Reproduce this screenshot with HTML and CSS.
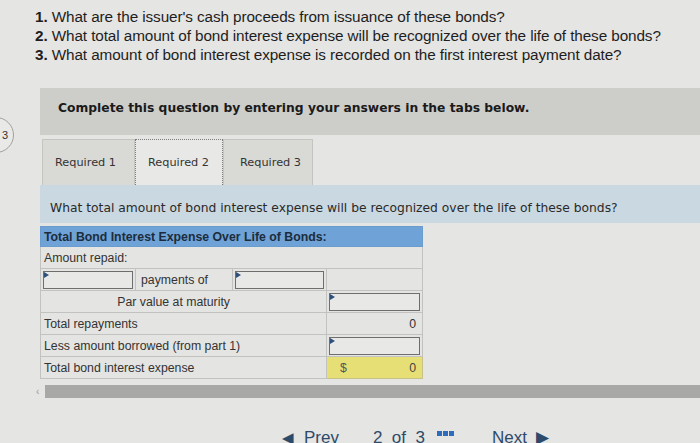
FILE: index.html
```html
<!DOCTYPE html>
<html>
<head>
<meta charset="utf-8">
<link rel="stylesheet" href="styles.css">
</head>
<body>
<div class="page">
  <div class="side-badge"><span>3</span></div>
  <div class="questions">
    <div class="q"><b>1.</b> What are the issuer's cash proceeds from issuance of these bonds?</div>
    <div class="q"><b>2.</b> What total amount of bond interest expense will be recognized over the life of these bonds?</div>
    <div class="q"><b>3.</b> What amount of bond interest expense is recorded on the first interest payment date?</div>
  </div>
  <div class="panel">
    <div class="instr">Complete this question by entering your answers in the tabs below.</div>
    <div class="tabs">
      <div class="tab">Required 1</div>
      <div class="tab active">Required 2</div>
      <div class="tab">Required 3</div>
    </div>
    <div class="prompt">What total amount of bond interest expense will be recognized over the life of these bonds?</div>
    <table class="grid">
      <colgroup><col class="c1"><col class="c2"><col class="c3"><col class="c4"></colgroup>
      <tr class="head"><td colspan="4">Total Bond Interest Expense Over Life of Bonds:</td></tr>
      <tr><td colspan="4">Amount repaid:</td></tr>
      <tr>
        <td class="inp"><div class="box"></div></td>
        <td class="txt">payments of</td>
        <td class="inp"><div class="box"></div></td>
        <td></td>
      </tr>
      <tr><td colspan="3" class="par">Par value at maturity</td><td class="inp"><div class="box"></div></td></tr>
      <tr><td colspan="3">Total repayments</td><td class="num">0</td></tr>
      <tr><td colspan="3">Less amount borrowed (from part 1)</td><td class="inp"><div class="box"></div></td></tr>
      <tr><td colspan="3">Total bond interest expense</td><td class="total"><span>$</span><span>0</span></td></tr>
    </table>
    <div class="scroll"><span class="arrow">‹</span><div class="bar"></div></div>
    <div class="pager">
      <span class="pv">&#9664;</span>
      <span class="pl">Prev</span>
      <span class="count">2&nbsp;&nbsp;of&nbsp;&nbsp;3</span>
      <span class="gridicon"><i></i><i></i><i></i></span>
      <span class="nx">Next&nbsp;&nbsp;&#9654;</span>
    </div>
  </div>
</div>
</body>
</html>
```
FILE: styles.css
```css
html, body {
  margin: 0;
  padding: 0;
  background: #e5e5e3;
  overflow: hidden;
}
.page {
  position: relative;
  width: 700px;
  height: 443px;
  overflow: hidden;
  font-family: "Liberation Sans", Arial, sans-serif;
  color: #222;
}
.side-badge {
  position: absolute;
  left: -22px;
  top: 117px;
  width: 36px;
  height: 36px;
  border: 1px solid #a0a0a0;
  border-radius: 50%;
  background: #e9e9e7;
  box-sizing: border-box;
  color: #333;
}
.side-badge span {
  position: absolute;
  left: 23px;
  top: 10px;
  font-size: 11px;
  line-height: 14px;
}
.questions {
  padding: 7px 0 0 35px;
  font-size: 15.3px;
  line-height: 19px;
  color: #1e1e1e;
  height: 88px;
  box-sizing: border-box;
  letter-spacing: -0.1px;
}
.q b { font-weight: bold; }
.panel {
  margin-left: 40px;
}
.instr {
  background: #cdcdca;
  height: 47px;
  padding-left: 18px;
  font-family: "DejaVu Sans", Verdana, sans-serif;
  font-weight: bold;
  font-size: 12.3px;
  line-height: 40px;
  color: #1a1a1a;
}
.tabs {
  display: flex;
  padding: 4px 0 0 2px;
  height: 50px;
  box-sizing: border-box;
}
.tab {
  width: 93px;
  height: 46px;
  box-sizing: border-box;
  background: #d9d9d6;
  border: 1px solid #c4c4c1;
  border-bottom: none;
  font-family: "DejaVu Sans", Verdana, sans-serif;
  font-size: 11.3px;
  color: #333;
  padding: 16px 0 0 12px;
}
.tab.active {
  width: 88px;
  background: #e8e8e6;
  border: 1px dotted #7c7c7c;
  border-bottom: none;
}
.tab:last-child { width: 90px; padding-left: 16px; }
.prompt {
  background: #c9d8e1;
  height: 38px;
  padding-left: 10px;
  font-family: "DejaVu Sans", Verdana, sans-serif;
  font-size: 12.3px;
  line-height: 46px;
  color: #2a2a2a;
}
.grid {
  margin-top: 3px;
  border-collapse: collapse;
  width: 382px;
  table-layout: fixed;
  font-size: 12.3px;
  color: #333;
  border: 1px solid #a7a7a5;
}
.c1 { width: 95px; }
.c2 { width: 97px; }
.c3 { width: 94px; }
.c4 { width: 96px; }
.grid td {
  height: 22px;
  padding: 0 3px;
  border: 1px solid #c2c2c0;
  background: #e4e4e2;
  white-space: nowrap;
  box-sizing: border-box;
}
.grid tr.head td {
  background: #6fa3d7;
  color: #1c2c3c;
  font-weight: bold;
  height: 20px;
  border-color: #6a9ccd;
}
.grid td.txt { padding-left: 5px; }
.grid td.par { text-align: right; padding-right: 96px; }
.grid td.num { text-align: right; padding-right: 6px; }
.grid td.inp {
  padding: 1px 2px;
  position: relative;
}
.box {
  height: 18px;
  box-sizing: border-box;
  border: 1px solid #6e6e6e;
  background: #e8e8e7;
  position: relative;
}
.box::before {
  content: "";
  position: absolute;
  left: 0;
  top: 0;
  border-top: 3px solid transparent;
  border-bottom: 3px solid transparent;
  border-left: 5px solid #2e4f7a;
}
.grid td.total {
  background: #e6df76;
  border-color: #c8c289;
}
.grid td.total span:first-child { padding-left: 10px; color: #555; }
.grid td.total span:last-child { float: right; padding-right: 3px; color: #444; }
.scroll {
  display: flex;
  align-items: center;
  margin-top: 6px;
  margin-left: -4px;
  height: 13px;
}
.scroll .arrow {
  width: 9px;
  font-size: 10px;
  color: #999;
  line-height: 13px;
}
.bar {
  flex: 1;
  height: 13px;
  background: #a8a8a6;
}
.pager {
  display: flex;
  align-items: flex-start;
  margin-top: 30px;
  padding-left: 242px;
  font-size: 17px;
  color: #2d4a6a;
  line-height: 20px;
}
.pv { margin-right: 10px; font-size: 15px; }
.pl { margin-right: 34px; }
.count { margin-right: 12px; }
.gridicon {
  display: flex;
  gap: 1px;
  padding-top: 3px;
  margin-right: 38px;
}
.gridicon i {
  width: 5px;
  height: 5px;
  background: #2d6dbb;
  display: block;
}
```
